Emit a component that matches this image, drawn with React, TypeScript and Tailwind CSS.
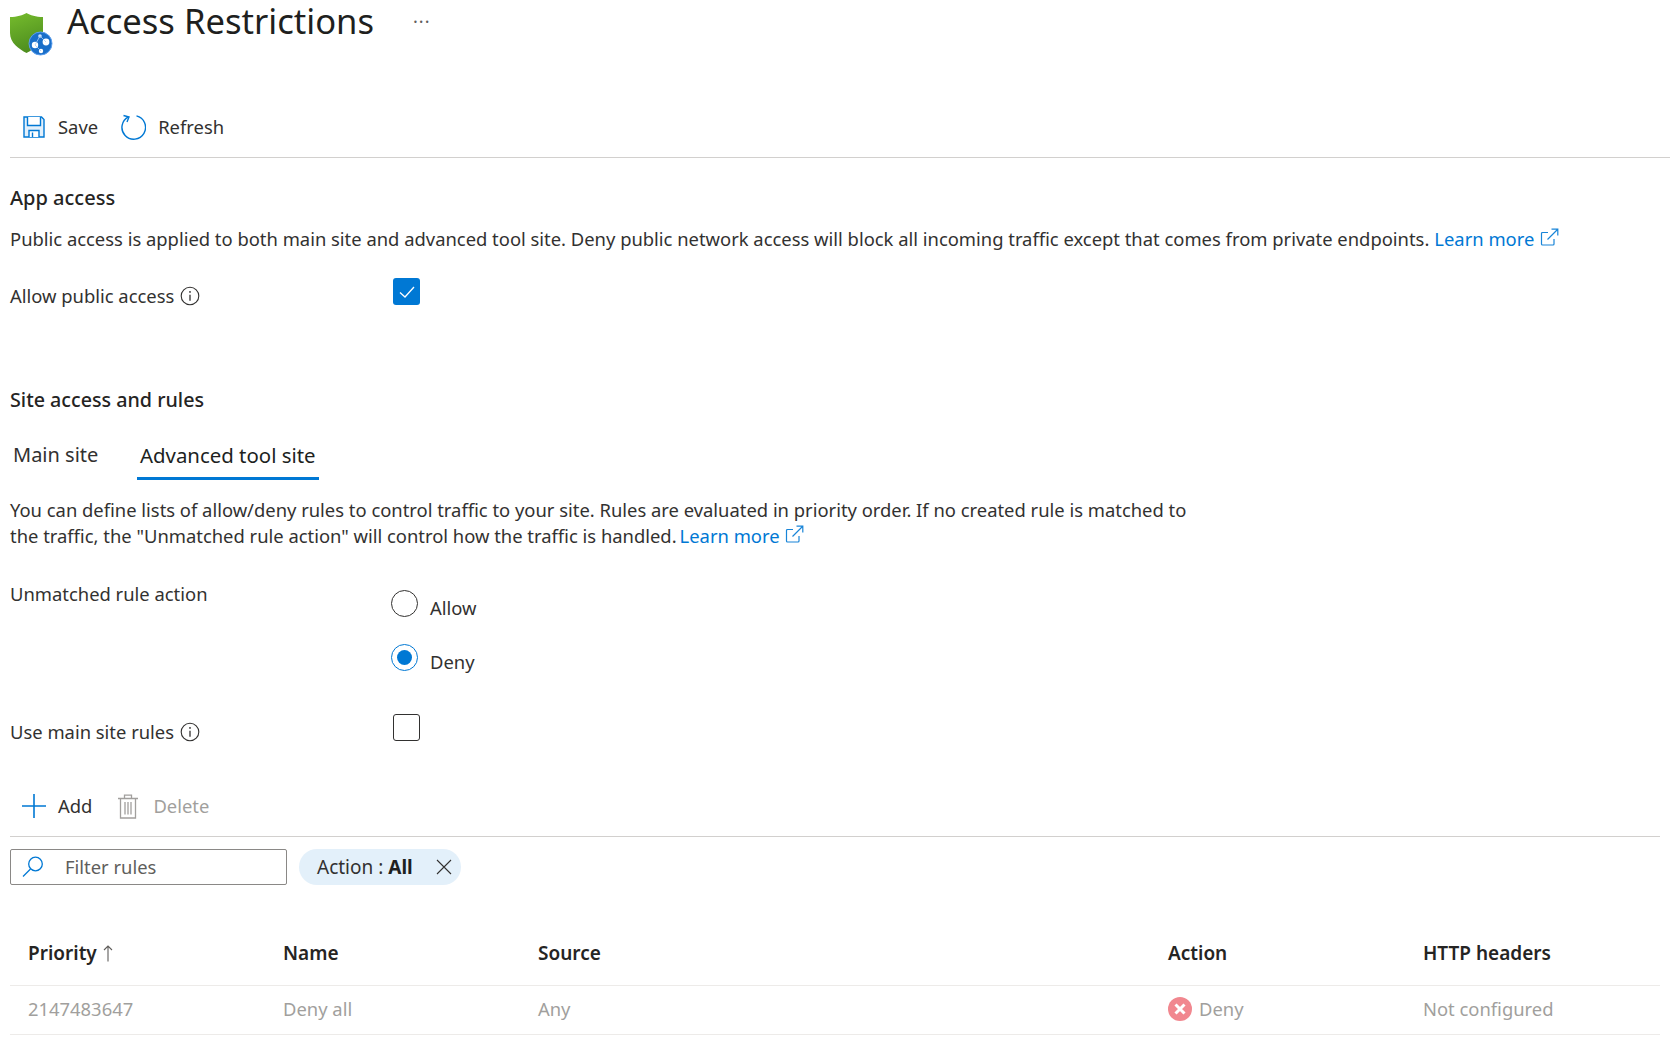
import React from "react";

const font = { fontFamily: '"Noto Sans", "Open Sans", sans-serif' };

function External() {
  return (
    <svg width="19" height="19" viewBox="0 0 19 19" fill="none" stroke="#0078d4" strokeWidth="1.2" className="block opacity-90">
      <path d="M8 4.5H2.5a1 1 0 0 0-1 1V16a1 1 0 0 0 1 1H13a1 1 0 0 0 1-1v-5" />
      <path d="M7.5 11.5 17.5 1.5M11.5 1.2h6.3v6.3" />
    </svg>
  );
}

function Info() {
  return (
    <svg width="20" height="20" viewBox="0 0 20 20" fill="none" stroke="#323130" strokeWidth="1.1">
      <circle cx="10" cy="10" r="8.8" />
      <path d="M10 8.8v6" strokeWidth="1.3" />
      <circle cx="10" cy="5.9" r="0.9" fill="#323130" stroke="none" />
    </svg>
  );
}

function Shield() {
  return (
    <svg width="46" height="46" viewBox="0 0 46 46">
      <defs>
        <linearGradient id="sg" x1="0" y1="0" x2="0.3" y2="1">
          <stop offset="0" stopColor="#76bc2d" />
          <stop offset="1" stopColor="#4f8f1f" />
        </linearGradient>
      </defs>
      <path d="M0 4C7 4 13 2 16.500 0 20 2 26 4 33 4V20C33 30 24 36 16.500 40 9 36 0 30 0 20Z" fill="url(#sg)" />
      <circle cx="30.500" cy="30.500" r="11.500" fill="#1a6fc9" stroke="#5ea0ef" strokeWidth="1" />
      <circle cx="25" cy="32" r="3.200" fill="#fff" />
      <circle cx="36" cy="29" r="3.400" fill="#fff" />
      <circle cx="31" cy="38" r="2.200" fill="#fff" />
      <circle cx="30" cy="23" r="1.800" fill="#cfe4fb" />
      <path d="M25 32 30 23 36 29M25 32 31 38" stroke="#a9cdf5" strokeWidth="0.8" fill="none" />
    </svg>
  );
}

function Save() {
  return (
    <svg width="22" height="22" viewBox="0 0 22 22" fill="none" stroke="#0078d4" strokeWidth="1.4">
      <path d="M1 1h17.500L21 3.500V21H1Z" fill="#e3f0fb" />
      <path d="M4.500 1v8.500h13V1" fill="#fff" />
      <path d="M6 21v-6.500h10V21" fill="#fff" />
      <path d="M9.500 16.500V21" />
    </svg>
  );
}

function Refresh() {
  return (
    <svg width="26" height="26" viewBox="0 0 26 26" fill="none" stroke="#0078d4" strokeWidth="1.4">
      <path d="M8.500 2.800A11.800 11.800 0 1 0 16.500 1.900" />
      <path d="M3.500 1.500 9 3 7 8" />
    </svg>
  );
}

function Plus() {
  return (
    <svg width="26" height="26" viewBox="0 0 26 26" stroke="#0078d4" strokeWidth="1.6">
      <path d="M13 1v24M1 13h24" />
    </svg>
  );
}

function Trash() {
  return (
    <svg width="20" height="25" viewBox="0 0 20 25" fill="none" stroke="#a19f9d" strokeWidth="1.300">
      <path d="M0 4.500h20M6.500 4.500V1.200h7v3.300M2.500 4.500V24h15V4.500M7 8v12.500M10 8v12.500M13 8v12.500" />
    </svg>
  );
}

function Search() {
  return (
    <svg width="22" height="22" viewBox="0 0 22 22" fill="none" stroke="#0078d4" strokeWidth="1.300">
      <circle cx="13.500" cy="8" r="6.800" />
      <path d="M8.500 13 1 20.500" />
    </svg>
  );
}

function Close() {
  return (
    <svg width="16" height="16" viewBox="0 0 16 16" stroke="#323130" strokeWidth="1.100">
      <path d="M1 1l14 14M15 1 1 15" />
    </svg>
  );
}

function Check() {
  return (
    <svg width="18" height="18" viewBox="0 0 18 18" fill="none" stroke="#fff" strokeWidth="1.300">
      <path d="M2 9.500 7 14 16 4" />
    </svg>
  );
}

function DenyIcon() {
  return (
    <svg width="24" height="24" viewBox="0 0 24 24" className="shrink-0">
      <circle cx="12" cy="12" r="12" fill="#f1878f" />
      <path d="M7.500 7.500l9 9M16.500 7.500l-9 9" stroke="#fff" strokeWidth="3" />
    </svg>
  );
}

function ArrowUp() {
  return (
    <svg width="10" height="17" viewBox="0 0 10 17" fill="none" stroke="#605e5c" strokeWidth="1.100">
      <path d="M5 16.500V1M1 5l4-4 4 4" />
    </svg>
  );
}

const columns = "grid grid-cols-[255px_255px_630px_255px_1fr] pl-[18px]";

export default function App() {
  return (
    <div style={font} className="h-[1056px] w-[1670px] overflow-hidden bg-white pl-[10px] text-[18.4px] leading-[26px] text-[#323130]">
      <header className="flex h-[44px] items-start">
        <div className="mt-[13px] shrink-0"><Shield /></div>
        <h1 className="ml-[11px] text-[34.6px] leading-[42px] text-[#201f1e]">Access Restrictions</h1>
        <span className="ml-[39px] mt-[8px] text-[18px] tracking-[1px] text-[#605e5c]">···</span>
      </header>

      <div className="flex h-[113px] items-end pb-[17px] pl-[13px]">
        <div className="flex h-[26px] items-center gap-[13px]">
          <Save />
          <span className="mr-[9px]">Save</span>
          <Refresh />
          <span className="-ml-[1px]">Refresh</span>
        </div>
      </div>
      <div className="h-[1px] bg-[#d2d0ce]" />

      <h2 className="mt-[27px] text-[20px] font-medium leading-[26px] text-[#252423]">App access</h2>
      <div className="mt-[15px] flex items-center whitespace-nowrap">
        <span>Public access is applied to both main site and advanced tool site. Deny public network access will block all incoming traffic except that comes from private endpoints.</span>
        <a className="ml-[5px] text-[#0078d4]">Learn more</a>
        <span className="ml-[6px] -mt-[3px]"><External /></span>
      </div>

      <div className="relative mt-[31px] flex h-[26px] items-center gap-[6px]">
        <span>Allow public access</span>
        <Info />
        <span className="absolute left-[383px] -top-[5px] flex h-[27px] w-[27px] items-center justify-center rounded-[3px] bg-[#0078d4]"><Check /></span>
      </div>

      <h2 className="mt-[78px] text-[19.7px] font-medium leading-[26px] text-[#252423]">Site access and rules</h2>

      <div className="mt-[20px] flex h-[47px] items-start text-[20.400px]">
        <span className="ml-[3px] h-[47px] w-[124px] text-[20px] leading-[44px]">Main site</span>
        <span className="h-[47px] border-b-[3px] border-[#0078d4] px-[3px] leading-[44px] text-[#201f1e]">Advanced tool site</span>
      </div>

      <div className="mt-[17px] whitespace-nowrap">
        <div>You can define lists of allow/deny rules to control traffic to your site. Rules are evaluated in priority order. If no created rule is matched to</div>
        <div className="flex items-center">
          <span>the traffic, the "Unmatched rule action" will control how the traffic is handled.</span>
          <a className="ml-[3px] text-[#0078d4]">Learn more</a>
          <span className="ml-[5px] -mt-[3px]"><External /></span>
        </div>
      </div>

      <div className="mt-[32px] flex">
        <div className="h-[26px] w-[381px]">Unmatched rule action</div>
        <div className="mt-[9px] flex flex-col gap-[23px]">
          <div className="flex items-start">
            <span className="h-[27px] w-[27px] rounded-full border border-[#323130]" />
            <span className="ml-[12px] mt-[5px]">Allow</span>
          </div>
          <div className="flex items-start">
            <span className="flex h-[27px] w-[27px] items-center justify-center rounded-full border border-[#0078d4]">
              <span className="h-[15px] w-[15px] rounded-full bg-[#0078d4]" />
            </span>
            <span className="ml-[12px] mt-[5px]">Deny</span>
          </div>
        </div>
      </div>

      <div className="relative mt-[44px] flex h-[26px] items-center gap-[6px]">
        <span>Use main site rules</span>
        <Info />
        <span className="absolute left-[383px] -top-[5px] h-[27px] w-[27px] rounded-[3px] border border-[#323130]" />
      </div>

      <div className="mt-[48px] flex h-[26px] items-center pl-[11px]">
        <Plus />
        <span className="ml-[11px]">Add</span>
        <span className="ml-[26px]"><Trash /></span>
        <span className="ml-[15px] text-[#a19f9d]">Delete</span>
      </div>
      <div className="mt-[17px] h-[1px] w-[1650px] bg-[#d2d0ce]" />

      <div className="mt-[12px] flex items-center gap-[12px]">
        <div className="flex h-[36px] w-[277px] items-center rounded-[2px] border border-[#8a8886] pl-[11px]">
          <Search />
          <span className="ml-[21px] text-[#605e5c]">Filter rules</span>
        </div>
        <div className="flex h-[36px] w-[162px] items-center rounded-full bg-[#e3f0fa] pl-[18px] text-[19px]">
          <span>Action : <b className="font-bold text-[#201f1e]">All</b></span>
          <span className="ml-auto mr-[9px]"><Close /></span>
        </div>
      </div>

      <div className="w-[1650px]">
        <div className={`${columns} mt-[36px] h-[65px] items-center border-b border-[#edebe9] text-[19px] font-semibold text-[#252423]`}>
          <span className="flex items-center gap-[6px]">Priority <ArrowUp /></span>
          <span>Name</span>
          <span>Source</span>
          <span>Action</span>
          <span>HTTP headers</span>
        </div>
        <div className={`${columns} h-[49px] items-center border-b border-[#edebe9] pb-[2px] text-[#a19f9d]`}>
          <span>2147483647</span>
          <span>Deny all</span>
          <span>Any</span>
          <span className="flex items-center gap-[7px]"><DenyIcon />Deny</span>
          <span>Not configured</span>
        </div>
      </div>
    </div>
  );
}
